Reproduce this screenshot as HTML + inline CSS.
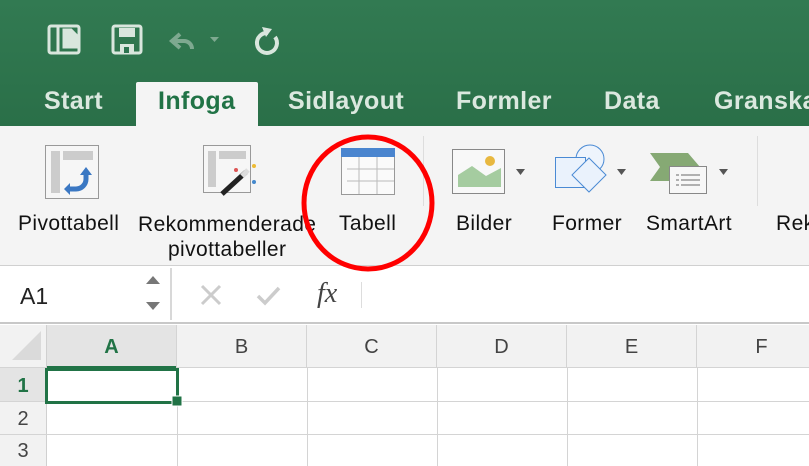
<!DOCTYPE html><html><head><style>
*{margin:0;padding:0;box-sizing:border-box}
body{width:809px;height:466px;overflow:hidden;font-family:"Liberation Sans",sans-serif;background:#fff;position:relative}
.a{position:absolute}
.tab{position:absolute;top:87px;font-size:25px;color:#dbe8df;font-weight:bold;letter-spacing:0.4px}
.lbl{position:absolute;font-size:21px;color:#111;text-align:center;letter-spacing:0.4px;white-space:nowrap}
.ch{position:absolute;top:325px;height:43px;border-right:1px solid #d4d4d4;font-size:20px;color:#444;text-align:center;line-height:45px}
.rh{position:absolute;left:0;width:46px;font-size:20px;color:#444;text-align:center}
</style></head><body>
<div class="a" style="left:0;top:0;width:809px;height:126px;background:linear-gradient(#327a52,#2a6f48)"></div>
<svg class="a" style="left:40px;top:20px" width="260" height="40" viewBox="0 0 260 40">
<g fill="none" stroke="#d9e6dd" stroke-width="3">
<rect x="9" y="6" width="30" height="27" rx="2"/><line x1="18" y1="6" x2="18" y2="33"/>
<path d="M24 10h7l5 5v12H24z" fill="#d9e6dd"/>
<rect x="73" y="6" width="28" height="27" rx="2"/>
</g>
<rect x="79" y="8" width="16" height="9" fill="#d9e6dd"/><rect x="80" y="24" width="14" height="9" fill="#d9e6dd"/><rect x="84" y="27" width="5" height="6" fill="#2d7550"/>
<path d="M140 14 l-8 7 8 7 M132 21 h12 a8 8 0 0 1 8 8" fill="none" stroke="#7ea990" stroke-width="4"/>
<path d="M170 17h9l-4.5 5z" fill="#7ea990"/>
<path d="M228 13a10 10 0 1 0 7 4" fill="none" stroke="#d9e6dd" stroke-width="4"/><path d="M222 7l10 2-6 8z" fill="#d9e6dd"/>
</svg>
<div class="a" style="left:136px;top:82px;width:122px;height:44px;background:#f4f4f4;border-radius:2px 2px 0 0"></div>
<div class="tab" style="left:44px">Start</div>
<div class="tab" style="left:158px;color:#217346">Infoga</div>
<div class="tab" style="left:288px">Sidlayout</div>
<div class="tab" style="left:456px">Formler</div>
<div class="tab" style="left:604px">Data</div>
<div class="tab" style="left:714px">Granska</div>
<div class="a" style="left:0;top:126px;width:809px;height:140px;background:#f4f4f4;border-bottom:1px solid #d0d0d0"></div>
<svg class="a" style="left:0;top:126px" width="809" height="80">
<rect x="45.5" y="19.5" width="53" height="53" fill="#f6f6f6" stroke="#999"/>
<rect x="51" y="25" width="9" height="42" fill="#ccc"/><rect x="63" y="25" width="30" height="9" fill="#ccc"/>
<path d="M68 63h8a10 10 0 0 0 10-10v-6" fill="none" stroke="#3b78c3" stroke-width="5"/><path d="M80 49l6-8 6 8z M70 57l-6 6 6 6z" fill="#3b78c3"/>
<rect x="203.5" y="19.5" width="47" height="47" fill="#f6f6f6" stroke="#999"/>
<rect x="208" y="25" width="8" height="36" fill="#ccc"/><rect x="219" y="25" width="27" height="8" fill="#ccc"/>
<line x1="222" y1="68" x2="246" y2="46" stroke="#222" stroke-width="5"/><line x1="242" y1="50" x2="248" y2="44" stroke="#ddd" stroke-width="5"/>
<circle cx="236" cy="44" r="2" fill="#d55"/><circle cx="254" cy="40" r="2" fill="#eb3"/><circle cx="254" cy="56" r="2" fill="#48c"/>
<rect x="341.5" y="22.5" width="53" height="46" fill="#fafafa" stroke="#999"/><rect x="341" y="22" width="54" height="9" fill="#4a85cf"/>
<path d="M347 43h47M347 55h47M359 31v37M377 31v37" stroke="#bbb"/>
<rect x="452.5" y="23.5" width="52" height="44" fill="#f8f8f8" stroke="#888"/><circle cx="490" cy="35" r="5" fill="#e8b840"/>
<path d="M458 61v-12l14-9 14 10 15-8v19z" fill="#a5cca0"/>
<path d="M516 43h9l-4.5 6z M617 43h9l-4.5 6z M719 43h9l-4.5 6z" fill="#555"/>
<circle cx="590" cy="33" r="14" fill="#eef4fc" stroke="#4a8ad4"/>
<rect x="555.5" y="31.5" width="30" height="30" fill="#eaf2fc" stroke="#4a8ad4"/>
<path d="M589 40l17 17-17 17-17-17z" fill="#eaf2fc" stroke="#4a8ad4" transform="translate(0,-8)"/>
<path d="M650 27h38l12 14-12 14h-38l10-14z" fill="#86a974"/>
<rect x="669.5" y="40.5" width="37" height="27" fill="#f7f7f7" stroke="#888"/>
<path d="M676 49h3M681 49h19M676 54h3M681 54h19M676 59h3M681 59h19" stroke="#999" stroke-width="1.5"/>
<line x1="423.5" y1="10" x2="423.5" y2="130" stroke="#ddd"/><line x1="757.5" y1="10" x2="757.5" y2="130" stroke="#ddd"/>
</svg>
<div class="lbl" style="left:18px;top:212px">Pivottabell</div>
<div class="lbl" style="left:138px;top:212px;line-height:25px">Rekommenderade<br>pivottabeller</div>
<div class="lbl" style="left:339px;top:212px">Tabell</div>
<div class="lbl" style="left:456px;top:212px">Bilder</div>
<div class="lbl" style="left:552px;top:212px">Former</div>
<div class="lbl" style="left:646px;top:212px">SmartArt</div>
<div class="lbl" style="left:776px;top:212px">Rek</div>
<div class="a" style="left:0;top:266px;width:809px;height:58px;background:#fff;border-bottom:2px solid #c8c8c8"></div>
<div class="a" style="left:170px;top:268px;width:2px;height:52px;background:#d8d8d8"></div>
<div class="a" style="left:20px;top:283px;font-size:23px;color:#222">A1</div>
<svg class="a" style="left:140px;top:274px" width="230" height="40">
<path d="M6 10l7-8 7 8zM6 28l7 8 7-8z" fill="#777"/>
<path d="M62 12l18 18M80 12L62 30" stroke="#ccc" stroke-width="3"/>
<path d="M118 22l7 7 14-15" fill="none" stroke="#ccc" stroke-width="3.5"/>
<line x1="221.5" y1="8" x2="221.5" y2="34" stroke="#ddd"/>
</svg>
<div class="a" style="left:317px;top:278px;font-family:'Liberation Serif',serif;font-style:italic;font-size:28px;color:#444">fx</div>
<div class="a" style="left:0;top:325px;width:809px;height:43px;background:#f2f2f2;border-bottom:1px solid #d4d4d4"></div>
<div class="a" style="left:46px;top:325px;width:131px;height:43px;background:#e4e4e4;border-bottom:2px solid #217346"></div>
<svg class="a" style="left:0;top:325px" width="46" height="43"><path d="M12 35L41 6v29z" fill="#dadada"/></svg>
<div class="a" style="left:46px;top:325px;width:1px;height:141px;background:#d0d0d0"></div>
<div class="ch" style="left:47px;width:130px;color:#217346;font-weight:bold">A</div>
<div class="ch" style="left:177px;width:130px">B</div>
<div class="ch" style="left:307px;width:130px">C</div>
<div class="ch" style="left:437px;width:130px">D</div>
<div class="ch" style="left:567px;width:130px">E</div>
<div class="ch" style="left:697px;width:130px">F</div>
<div class="a" style="left:0;top:368px;width:46px;height:98px;background:#f2f2f2"></div>
<div class="a" style="left:0;top:368px;width:46px;height:33px;background:#e4e4e4"></div>
<svg class="a" style="left:0;top:368px" width="809" height="98">
<path d="M0 33.5h809M0 66.5h809M0 98.5h809" stroke="#d4d4d4"/>
<path d="M177.5 0v98M307.5 0v98M437.5 0v98M567.5 0v98M697.5 0v98" stroke="#d4d4d4"/>
<rect x="46.5" y="1.5" width="131" height="33" fill="none" stroke="#217346" stroke-width="3"/>
<rect x="172" y="28" width="10" height="10" fill="#217346" stroke="#fff"/>
</svg>
<div class="rh" style="top:375px;color:#217346;font-weight:bold">1</div>
<div class="rh" style="top:408px">2</div>
<div class="rh" style="top:440px">3</div>
<svg class="a" style="left:0;top:0" width="809" height="466"><ellipse cx="368" cy="203" rx="64" ry="66" fill="none" stroke="#f00" stroke-width="5"/></svg>
</body></html>
